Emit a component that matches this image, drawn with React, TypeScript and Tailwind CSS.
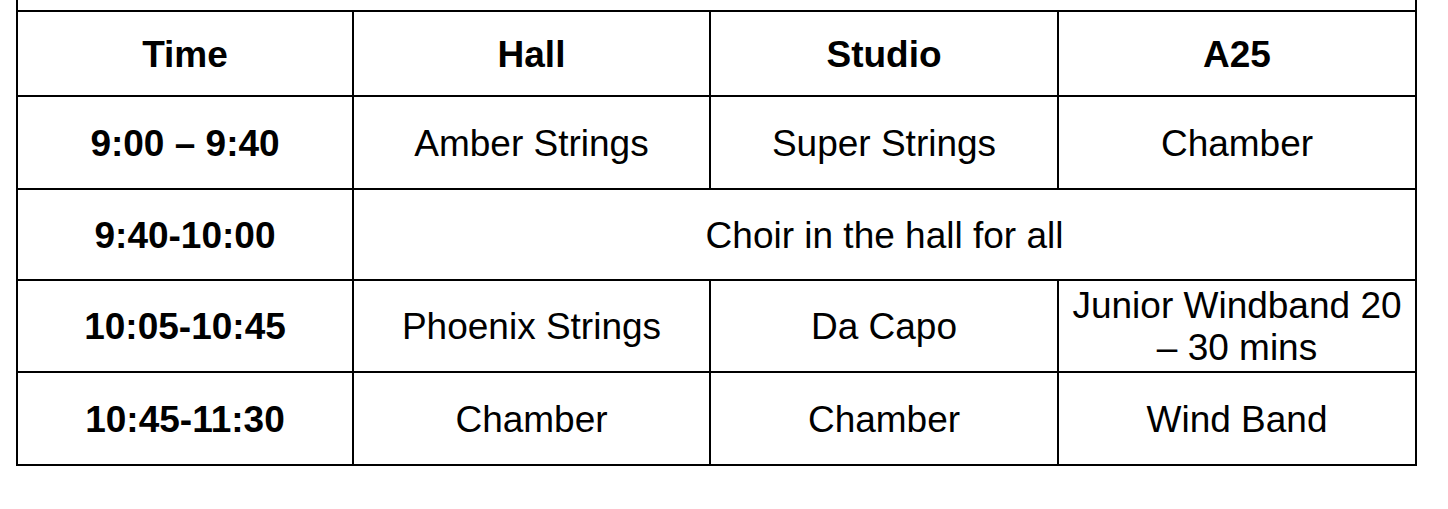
const rows: { time: string; cells: string[] | string }[] = [
  { time: "9:00 – 9:40", cells: ["Amber Strings", "Super Strings", "Chamber"] },
  { time: "9:40-10:00", cells: "Choir in the hall for all" },
  { time: "10:05-10:45", cells: ["Phoenix Strings", "Da Capo", "Junior Windband 20 – 30 mins"] },
  { time: "10:45-11:30", cells: ["Chamber", "Chamber", "Wind Band"] },
];

const rowH = ["h-[93px]", "h-[91px]", "h-[92px]", "h-[93px]"];

export default function App() {
  return (
    <div className="h-[509px] w-[1448px] bg-white text-black" style={{ fontFamily: '"Liberation Sans", Arial, sans-serif' }}>
      <table className="ml-[16px] w-[1399px] table-fixed border-collapse text-[37px] leading-[42px]">
        <colgroup>
          <col className="w-[336px]" />
          <col className="w-[357px]" />
          <col className="w-[348px]" />
          <col className="w-[358px]" />
        </colgroup>
        <tbody>
          <tr>
            <td colSpan={4} className="h-[11px] border-x-2 border-b-2 border-black p-0" />
          </tr>
          <tr className="h-[85px] font-bold">
            {["Time", "Hall", "Studio", "A25"].map((h) => (
              <td key={h} className="border-2 border-black px-2 pt-[2px] text-center align-middle">
                {h}
              </td>
            ))}
          </tr>
          {rows.map((r, i) => (
            <tr key={r.time} className={rowH[i]}>
              <td className="border-2 border-black px-2 pt-[2px] text-center align-middle font-bold">{r.time}</td>
              {typeof r.cells === "string" ? (
                <td colSpan={3} className="border-2 border-black px-2 pt-[2px] text-center align-middle">
                  {r.cells}
                </td>
              ) : (
                r.cells.map((c, j) => (
                  <td key={j} className="border-2 border-black px-2 pt-[2px] text-center align-middle">
                    {c}
                  </td>
                ))
              )}
            </tr>
          ))}
        </tbody>
      </table>
    </div>
  );
}
